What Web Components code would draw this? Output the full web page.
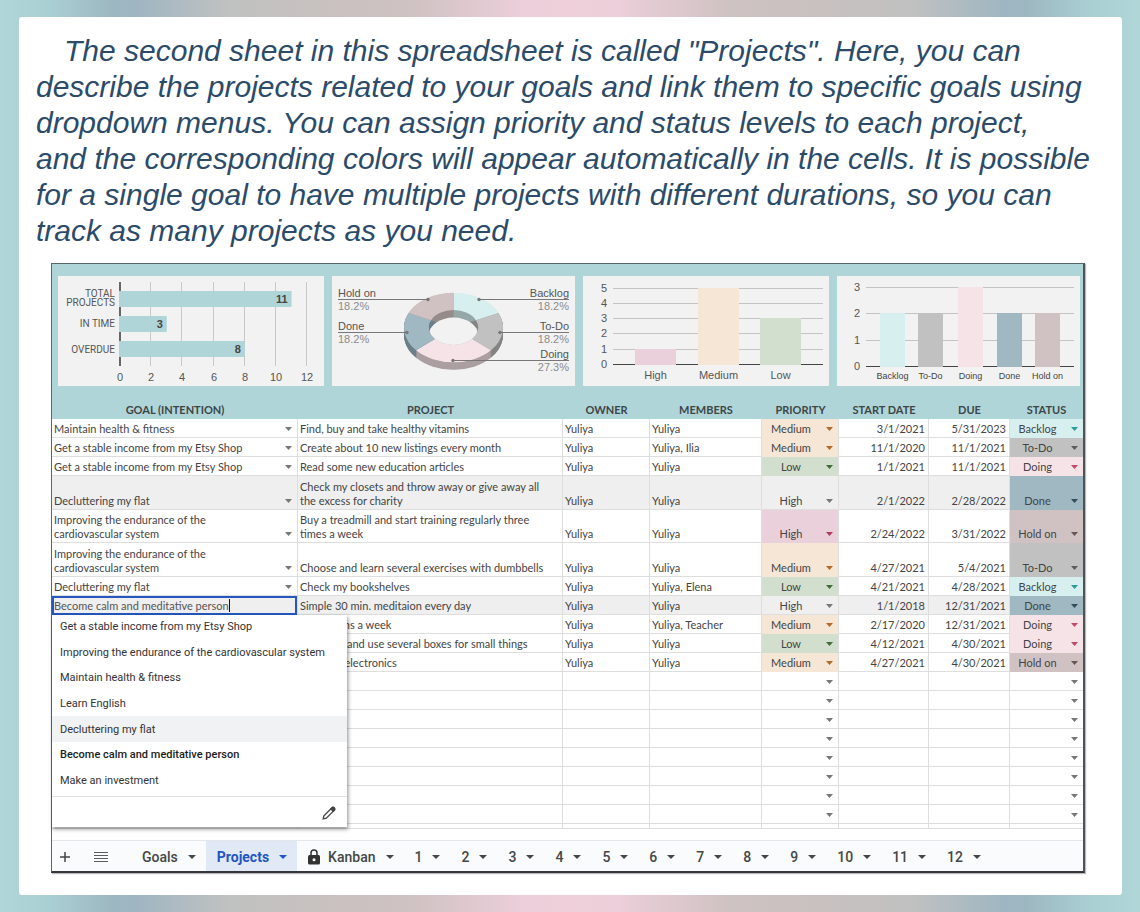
<!DOCTYPE html>
<html lang="en">
<head>
<meta charset="utf-8">
<title>Projects sheet</title>
<style>
  html { min-height: 100%; background: linear-gradient(90deg, #b0d6d8 0, #aad0d4 4%, #9db7c1 10%, #9fb6c2 12%, #c0c1c1 20%, #c8c1c0 28%, #cfc2c2 36%, #eccfda 46%, #efd0da 50%, #eccfda 54%, #cfc2c2 64%, #c8c1c0 72%, #c0c1c1 80%, #9fb6c2 88%, #9db7c1 90%, #aad0d4 96%, #b0d6d8 100%); }
  body { margin: 0; padding: 17px 18px 18px 19px; font-family: "Liberation Sans", Arial, sans-serif; }
</style>
</head>
<body>
<guide-page>
  <p slot="intro">The second sheet in this spreadsheet is called "Projects". Here, you can<br>describe the projects related to your goals and link them to specific goals using<br>dropdown menus. You can assign priority and status levels to each project,<br>and the corresponding colors will appear automatically in the cells. It is possible<br>for a single goal to have multiple projects with different durations, so you can<br>track as many projects as you need.</p>
  <sheet-window>
    <chart-row slot="charts">
      <totals-chart></totals-chart>
      <status-donut></status-donut>
      <priority-chart></priority-chart>
      <status-chart></status-chart>
    </chart-row>
    <project-table></project-table>
    <sheet-tabs slot="tabs"></sheet-tabs>
  </sheet-window>
</guide-page>

<script>
const define = (name, html, setup) => {
  const template = document.createElement('template');
  template.innerHTML = html;
  customElements.define(name, class extends HTMLElement {
    constructor() {
      super();
      this.attachShadow({ mode: 'open' }).append(template.content.cloneNode(true));
    }
    connectedCallback() {
      if (setup && !this.ready) { this.ready = true; setup(this, this.shadowRoot); }
    }
  });
};

const STATUS = {
  'Backlog': { bg: '#d8eff0', side: '#96a7a8', arrow: '#2f9a9a' },
  'To-Do':   { bg: '#c1c1c1', side: '#858585', arrow: '#5c5c5c' },
  'Doing':   { bg: '#f5e3e7', side: '#ab9fa2', arrow: '#c04a6b' },
  'Done':    { bg: '#9fb8c1', side: '#6c7f88', arrow: '#2f4d5c' },
  'Hold on': { bg: '#d0c2c2', side: '#968b8b', arrow: '#6a5555' }
};
const PRIORITY = {
  'High':   { bg: '#ead0da', arrow: '#b03a5e' },
  'Medium': { bg: '#f5e6d6', arrow: '#b4682a' },
  'Low':    { bg: '#d3dfce', arrow: '#3f6b35' }
};

/* ---------- page ---------- */
define('guide-page', `
  <style>
    :host { display: block; background: #fff; border-radius: 3px; padding: 16px 37px 22px 32px; }
    ::slotted(p) { margin: 0 -37px 14px -15px; text-indent: 28px; font-size: 30px; line-height: 36px; font-style: italic; color: #2b4b69; }
  </style>
  <slot name="intro"></slot>
  <slot></slot>`);

define('sheet-window', `
  <style>
    :host { display: block; border: 1px solid #55686a; border-right: 2px solid #4c5256; border-bottom: 2px solid #33363a; background: #fff; box-shadow: 1px 1px 1px #bbb; }
    .top { background: #b0d5d8; padding: 12px 3px 0 6px; }
    .sheet { padding-bottom: 11px; }
  </style>
  <div class="top"><slot name="charts"></slot></div>
  <div class="sheet"><slot></slot></div>
  <slot name="tabs"></slot>`);

define('chart-row', `
  <style>
    :host { display: grid; grid-template-columns: 266fr 243fr 246fr 243fr; gap: 8px; }
    ::slotted(*) { display: block; background: #f2f2f2; }
  </style>
  <slot></slot>`);

/* ---------- charts ---------- */
const chartCss = `<style>
  svg { display: block; width: 100%; height: auto; }
  text { font: 11px "Liberation Sans", Arial, sans-serif; fill: #555; }
  .small { font-size: 9px; fill: #444; }
  .name { font: 10px Roboto, sans-serif; fill: #555; }
  .value { font-weight: 700; fill: #444; }
  .pct { fill: #8c8c8c; }
</style>`;

define('totals-chart', chartCss + `<svg viewBox="0 0 266 110" role="img" aria-label="Project totals"></svg>`, (el, root) => {
  const x0 = 62, unit = 15.6;
  let s = '';
  for (let v = 0; v <= 12; v += 2) {
    const x = Math.round(x0 + v * unit);
    s += `<rect x="${x - 1}" y="6" width="${v ? 1 : 2}" height="84" fill="${v ? '#c8c8c8' : '#666'}"/>`;
    s += `<text x="${x}" y="105" text-anchor="middle">${v}</text>`;
  }
  [[11, 15], [3, 40], [8, 65]].forEach(([v, y]) => {
    const end = x0 + v * unit;
    s += `<path d="M${x0 - 1} ${y}H${end - 1}q1 0 1 1v14q0 1-1 1H${x0 - 1}z" fill="#b0d5d8"/>`;
    s += `<text class="value" x="${end - 4}" y="${y + 12}" text-anchor="end">${v}</text>`;
  });
  s += `<text class="name" x="57" y="21" text-anchor="end">TOTAL</text><text class="name" x="57" y="30" text-anchor="end">PROJECTS</text>
        <text class="name" x="57" y="51" text-anchor="end">IN TIME</text><text class="name" x="57" y="77" text-anchor="end">OVERDUE</text>`;
  root.querySelector('svg').innerHTML = s;
});

define('status-donut', chartCss + `<svg viewBox="0 0 243 110" role="img" aria-label="Projects by status"></svg>`, (el, root) => {
  const cx = 121.5, cy = 51.5, RX = 49.5, RY = 34.8, rx = 24.7, ry = 17.4, depth = 7.5;
  const point = (a, x, y, dy) => `${(cx + x * Math.sin(a)).toFixed(2)} ${(cy + dy - y * Math.cos(a)).toFixed(2)}`;
  const counts = { 'Backlog': 2, 'To-Do': 2, 'Doing': 3, 'Done': 2, 'Hold on': 2 };
  const ring = (key, dy, inner) => {
    let a = 0, out = '';
    for (const [name, n] of Object.entries(counts)) {
      const b = a + n / 11 * 2 * Math.PI;
      out += inner
        ? `<path d="M${point(a, RX, RY, dy)}A${RX} ${RY} 0 0 1 ${point(b, RX, RY, dy)}L${point(b, rx, ry, dy)}A${rx} ${ry} 0 0 0 ${point(a, rx, ry, dy)}z" fill="${STATUS[name][key]}"/>`
        : `<path d="M${cx} ${cy + dy}L${point(a, RX, RY, dy)}A${RX} ${RY} 0 0 1 ${point(b, RX, RY, dy)}z" fill="${STATUS[name][key]}"/>`;
      a = b;
    }
    return out;
  };
  let s = `<clipPath id="hole"><ellipse cx="${cx}" cy="${cy}" rx="${rx}" ry="${ry}"/></clipPath>`;
  for (let d = depth; d > 0; d -= 0.5) s += ring('side', d, true);
  s += `<g clip-path="url(#hole)">${ring('side', 0, false)}<ellipse cx="${cx}" cy="${cy + depth}" rx="${rx}" ry="${ry}" fill="#f2f2f2"/></g>`;
  s += ring('bg', 0, true);
  const callout = (name, pct, y, dot, end, anchor) => `
    <path d="M${dot} ${y + .5}H${end}" stroke="#777"/><circle cx="${dot}" cy="${y + .5}" r="1.7" fill="#777"/>
    <text x="${end}" y="${y - 2}" text-anchor="${anchor}">${name}</text>
    <text class="pct" x="${end}" y="${y + 11}" text-anchor="${anchor}">${pct}</text>`;
  s += callout('Hold on', '18.2%', 23, 96, 6, 'start') + callout('Done', '18.2%', 56, 75, 6, 'start')
     + callout('Backlog', '18.2%', 23, 147, 237, 'end') + callout('To-Do', '18.2%', 56, 168, 237, 'end')
     + callout('Doing', '27.3%', 84, 121, 237, 'end');
  root.querySelector('svg').innerHTML = s;
});

const columns = (root, o) => {
  let s = '';
  for (let v = 0; v <= o.max; v++) {
    const y = Math.round(o.base - v * o.unit);
    s += `<rect x="30" y="${y}" width="${o.right - 30}" height="1" fill="${v ? '#c4c4c4' : '#444'}"/>`;
    s += `<text x="24" y="${y + 4}" text-anchor="end">${v}</text>`;
  }
  o.bars.forEach(([name, v, x, fill]) => {
    const top = Math.round(o.base - v * o.unit);
    s += `<rect x="${x}" y="${top}" width="${o.width}" height="${o.base + 1 - top}" fill="${fill}"/>`;
    s += `<text class="${o.cls}" x="${x + o.width / 2}" y="103" text-anchor="middle">${name}</text>`;
  });
  root.querySelector('svg').innerHTML = s;
};

define('priority-chart', chartCss + `<svg viewBox="0 0 246 110" role="img" aria-label="Projects by priority"></svg>`, (el, root) =>
  columns(root, { max: 5, base: 88, unit: 15.3, right: 240, width: 41, cls: '', bars: [
    ['High', 1, 52, PRIORITY.High.bg], ['Medium', 5, 115, PRIORITY.Medium.bg], ['Low', 3, 177, PRIORITY.Low.bg]] }));

define('status-chart', chartCss + `<svg viewBox="1 0 243 110" role="img" aria-label="Status counts"></svg>`, (el, root) =>
  columns(root, { max: 3, base: 90, unit: 26.3, right: 238, width: 25, cls: 'small', bars: [
    ['Backlog', 2, 44, STATUS['Backlog'].bg], ['To-Do', 2, 82, STATUS['To-Do'].bg], ['Doing', 3, 122, STATUS['Doing'].bg],
    ['Done', 2, 161, STATUS['Done'].bg], ['Hold on', 2, 199, STATUS['Hold on'].bg]] }));

/* ---------- drop-down cell ---------- */
define('cell-select', `
  <style>
    :host { display: grid; align-items: center; }
    select { grid-area: 1 / 1; appearance: none; width: 100%; height: 14px; margin: 0; border: 0; padding: 0 18px 0 0; background: none; color: inherit; font: inherit; line-height: 14px; text-align: center; text-align-last: center; outline: 0; }
    svg { grid-area: 1 / 1; justify-self: end; margin-right: 5px; width: 7px; height: 4px; fill: var(--arrow, #777); pointer-events: none; }
  </style>
  <select></select><svg viewBox="0 0 7 4"><path d="M0 0h7L3.500 4z"/></svg>`, (el, root) => {
  const select = root.querySelector('select');
  const value = el.getAttribute('value') || '';
  const list = el.getAttribute('kind') === 'Status' ? STATUS : PRIORITY;
  select.setAttribute('aria-label', el.getAttribute('kind'));
  ['', ...Object.keys(list)].forEach(name => select.add(new Option(name, name, name === value, name === value)));
});

define('goal-picker', `
  <style>
    :host { display: block; position: absolute; z-index: 2; top: 100%; left: 0; width: 295px; background: #fff; box-shadow: 1px 2px 4px rgba(0,0,0,.45); font: 11px Roboto, sans-serif; color: #333; overflow: hidden; }
    ul { list-style: none; margin: -1px 0 0; padding: 0 0 3px; display: grid; grid-auto-rows: 1fr; height: 179px; border-bottom: 1px solid #dfe3e8; }
    li { display: flex; align-items: center; padding: 0 8px; white-space: nowrap; }
    li.hover { background: #f1f2f4; }
    li.current { font-weight: 500; color: #1c1c1c; }
    .foot { display: flex; justify-content: flex-end; padding: 8px 10px 6px; }
    button { border: 0; padding: 0; background: none; height: 16px; }
    svg { display: block; width: 16px; height: 16px; }
  </style>
  <ul role="listbox" aria-label="Goals">
    <li role="option">Get a stable income from my Etsy Shop</li>
    <li role="option">Improving the endurance of the cardiovascular system</li>
    <li role="option">Maintain health &amp; fitness</li>
    <li role="option">Learn English</li>
    <li role="option" class="hover">Decluttering my flat</li>
    <li role="option" class="current" aria-selected="true">Become calm and meditative person</li>
    <li role="option">Make an investment</li>
  </ul>
  <div class="foot"><button type="button" aria-label="Edit"><svg viewBox="0 0 16 16" fill="none" stroke="#444" stroke-width="1.300"><path d="M2.200 13.800l.7-3L11 2.700q1-1 2 0l.4.4q1 1 0 2L5.300 13.200z"/><path d="M9.700 3.900l2.500 2.500L13.600 5V3.300L12.500 2.300H11.300z" fill="#444"/></svg></button></div>`);

/* ---------- table ---------- */
define('project-table', `
  <style>
    :host { display: block; font: 11px/14px Lato, Carlito, sans-serif; color: #444; }
    table { width: 100%; table-layout: fixed; border-collapse: separate; border-spacing: 0; white-space: nowrap; }
    th { height: 33px; box-sizing: border-box; padding: 0 0 2px; background: #b0d5d8; vertical-align: bottom; font-weight: 700; color: #3c4648; }
    td { box-sizing: border-box; height: 19px; padding: 0 3px 1px 2px; vertical-align: bottom; border-right: 1px solid #dedede; border-bottom: 1px solid #dedede; }
    td:last-child { border-right: 0; }
    tr.shade td { background: #efefef; }
    td.tint, tr.shade td.tint { background: var(--tint); border-bottom-color: var(--tint); }
    td.pick { padding: 0 0 1px; }
    td.date { text-align: right; }
    tr.half td { height: 5px; padding: 0; }
    .goal { display: flex; align-items: flex-end; justify-content: space-between; width: 100%; border: 0; margin: 0; padding: 0 2px 0 0; background: none; color: inherit; font: inherit; text-align: left; }
    .goal svg { width: 7px; height: 4px; margin-bottom: 5px; fill: #777; }
    td.editing { position: relative; padding: 0; border-bottom: 0; }
    .field { display: flex; align-items: center; box-sizing: border-box; height: 19px; border: 2px solid #2458c0; background: #efefef; }
    input { height: 14px; box-sizing: border-box; border: 0; margin: 0; padding: 0; background: none; font: inherit; color: #555; outline: 0; field-sizing: content; }
    i { width: 1px; height: 13px; background: #111; }
  </style>
  <table>
    <colgroup><col style="width:246px"><col style="width:265px"><col style="width:87px"><col style="width:112px"><col style="width:77px"><col style="width:90px"><col style="width:81px"><col style="width:73px"></colgroup>
    <thead><tr><th>GOAL (INTENTION)</th><th>PROJECT</th><th>OWNER</th><th>MEMBERS</th><th>PRIORITY</th><th>START DATE</th><th>DUE</th><th>STATUS</th></tr></thead>
    <tbody></tbody>
  </table>`, (el, root) => {
  const rows = [
    ['Maintain health & fitness', 'Find, buy and take healthy vitamins', 'Yuliya', 'Medium', '3/1/2021', '5/31/2023', 'Backlog'],
    ['Get a stable income from my Etsy Shop', 'Create about 10 new listings every month', 'Yuliya, Ilia', 'Medium', '11/1/2020', '11/1/2021', 'To-Do'],
    ['Get a stable income from my Etsy Shop', 'Read some new education articles', 'Yuliya', 'Low', '1/1/2021', '11/1/2021', 'Doing'],
    ['Decluttering my flat', 'Check my closets and throw away or give away all<br>the excess for charity', 'Yuliya', 'High', '2/1/2022', '2/28/2022', 'Done', 34, 'shade'],
    ['Improving the endurance of the<br>cardiovascular system', 'Buy a treadmill and start training regularly three<br>times a week', 'Yuliya', 'High', '2/24/2022', '3/31/2022', 'Hold on', 33],
    ['Improving the endurance of the<br>cardiovascular system', 'Choose and learn several exercises with dumbbells', 'Yuliya', 'Medium', '4/27/2021', '5/4/2021', 'To-Do', 34],
    ['Decluttering my flat', 'Check my bookshelves', 'Yuliya, Elena', 'Low', '4/21/2021', '4/28/2021', 'Backlog'],
    [null, 'Simple 30 min. meditaion every day', 'Yuliya', 'High', '1/1/2018', '12/31/2021', 'Done', 19, 'shade'],
    ['', '2-3 lessons a week', 'Yuliya, Teacher', 'Medium', '2/17/2020', '12/31/2021', 'Doing'],
    ['', 'Find, buy and use several boxes for small things', 'Yuliya', 'Low', '4/12/2021', '4/30/2021', 'Doing'],
    ['', 'Buy new electronics', 'Yuliya', 'Medium', '4/27/2021', '4/30/2021', 'Hold on']
  ];
  const pick = (kind, value, look) => look
    ? `<td class="pick tint" style="--tint:${look.bg};--arrow:${look.arrow}"><cell-select kind="${kind}" value="${value}"></cell-select></td>`
    : `<td class="pick"><cell-select kind="${kind}" value="${value}"></cell-select></td>`;
  let html = '';
  rows.forEach(r => {
    const [goal, project, members, priority, start, due, status, height = 19, cls = ''] = r;
    const first = goal === null
      ? `<td class="editing"><div class="field"><input aria-label="Goal" value="Become calm and meditative person"><i></i></div><goal-picker></goal-picker></td>`
      : goal ? `<td><button type="button" class="goal" aria-haspopup="listbox"><span>${goal}</span><svg viewBox="0 0 7 4"><path d="M0 0h7L3.500 4z"/></svg></button></td>` : '<td></td>';
    html += `<tr class="${cls}" style="height:${height}px">${first}<td>${project}</td><td>Yuliya</td><td>${members}</td>`
      + pick('Priority', priority, cls ? null : PRIORITY[priority])
      + `<td class="date">${start}</td><td class="date">${due}</td>` + pick('Status', status, STATUS[status]) + '</tr>';
  });
  for (let n = 0; n < 8; n++) html += `<tr><td></td><td></td><td></td><td></td>${pick('Priority', '')}<td></td><td></td>${pick('Status', '')}</tr>`;
  html += '<tr class="half">' + '<td></td>'.repeat(8) + '</tr>';
  root.querySelector('tbody').innerHTML = html;
});

/* ---------- tab bar ---------- */
define('sheet-tabs', `
  <style>
    :host { display: flex; box-sizing: border-box; height: 31px; border-top: 1px solid #e4e7ea; background: #f9fbfd; font: 500 14px Roboto, sans-serif; color: #444746; overflow: hidden; }
    button { display: flex; align-items: center; border: 0; margin: 0; padding: 2px 10px 0 11px; background: none; color: inherit; font: inherit; }
    button.on { background: #e1e9f7; color: #1f55c4; font-weight: 700; }
    button.tool { justify-content: center; width: 26px; padding: 2px 0 0; }
    button.list { width: 46px; margin-right: 7px; }
    .caret { width: 8px; height: 4px; margin-left: 10px; fill: currentColor; }
    .lock { width: 12px; height: 16px; margin-right: 8px; }
  </style>
  <button type="button" class="tool" aria-label="Add sheet"><svg width="10" height="10" viewBox="0 0 10 10"><path d="M5 0v10M0 5h10" stroke="#444746" stroke-width="1.500"/></svg></button>
  <button type="button" class="tool list" aria-label="All sheets"><svg width="14" height="10" viewBox="0 0 14 10"><path d="M0 .5h14M0 3.500h14M0 6.500h14M0 9.500h14" stroke="#5a5d5c"/></svg></button>`, (el, root) => {
  ['Goals', 'Projects', 'Kanban', ...Array.from({ length: 12 }, (_, i) => String(i + 1))].forEach(name => {
    const b = document.createElement('button');
    b.type = 'button';
    if (name === 'Projects') b.className = 'on';
    const lock = name === 'Kanban' ? '<svg class="lock" viewBox="0 0 12 16"><path d="M3 6V4a3 3 0 0 1 6 0v2" fill="none" stroke="#333" stroke-width="1.500"/><rect y="6" width="12" height="9.500" rx="1.500" fill="#333"/><circle cx="6" cy="10.700" r="1.500" fill="#f9fbfd"/></svg>' : '';
    b.innerHTML = `${lock}<span>${name}</span><svg class="caret" viewBox="0 0 8 4"><path d="M0 0h8L4 4z"/></svg>`;
    root.append(b);
  });
});
</script>
</body>
</html>
